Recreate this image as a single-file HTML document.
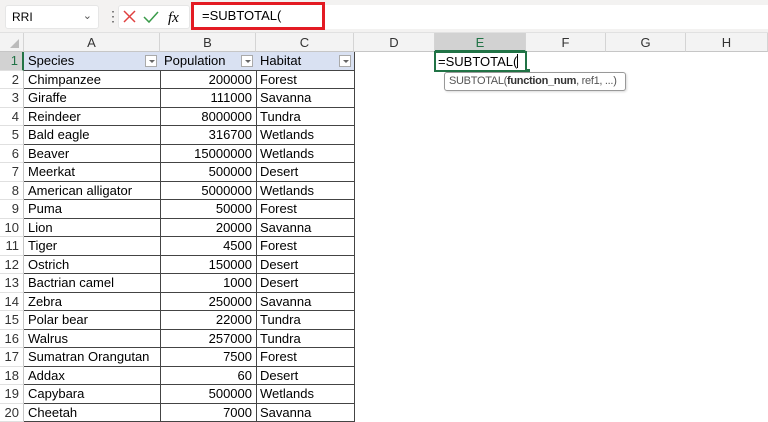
<!DOCTYPE html>
<html><head><meta charset="utf-8"><style>
*{box-sizing:border-box;margin:0;padding:0}
body{width:768px;height:420px;overflow:hidden;background:#fff;font-family:"Liberation Sans",sans-serif;position:relative;font-size:13px;color:#000}
.abs{position:absolute}
.tb{left:0;top:0;width:768px;height:33px;background:#f3f2f1;border-bottom:1px solid #e1e1e1}
.ch{top:33px;height:19px;background:#f3f3f3;border-right:1px solid #d4d4d4;border-bottom:1px solid #c6c6c6;text-align:center;line-height:19px;font-size:13px;color:#333}
.r{left:0;width:768px;height:18.5px}
.c{position:absolute;top:0;height:18.5px;line-height:18px;padding:0 4px;white-space:nowrap;overflow:hidden}
.rh{left:0;width:24px;background:#fff;border-right:1px solid #c6c6c6;border-bottom:1px solid #e0e0e0;text-align:right;padding-right:4px;color:#333}
.a{left:24px;width:137px;border-right:1px solid #444;border-bottom:1px solid #444}
.b{left:160px;width:97px;border-right:1px solid #444;border-bottom:1px solid #444;text-align:right}
.cc{left:256px;width:99px;border-right:1px solid #444;border-bottom:1px solid #444}
.h .a,.h .b,.h .cc{background:#d9e1f2}
.dd{position:absolute;right:3px;top:3px;width:12px;height:12px;border:1px solid #aaa;background:#fff}
.dd:after{content:"";position:absolute;left:3px;top:4px;border-left:3px solid transparent;border-right:3px solid transparent;border-top:3px solid #666}
</style></head><body>
<div class="abs tb"></div>
<div class="abs" style="left:5px;top:5px;width:94px;height:24px;background:#fff;border-radius:3px;border:1px solid #e6e6e6;line-height:22px;padding-left:6px;font-size:12px">RRI<span style="position:absolute;right:6px;top:-1px;font-size:11px;color:#555">&#8964;</span></div>
<div class="abs" style="left:106px;top:8px;color:#555;font-size:14px;line-height:16px">&#8942;</div>
<div class="abs" style="left:118px;top:5px;width:72px;height:24px;background:#fff;border-radius:3px;border:1px solid #e6e6e6"></div>
<svg class="abs" style="left:122px;top:9px" width="60" height="16"><path d="M2 2 L13 13 M13 2 L2 13" stroke="#e04040" stroke-width="1.5"/><path d="M22 8 L27 13 L36 3" stroke="#3a9b4a" stroke-width="1.5" fill="none"/><text x="46" y="13" font-family="Liberation Serif" font-style="italic" font-size="15">fx</text></svg>
<div class="abs" style="left:193px;top:5px;width:575px;height:24px;background:#fff"></div>
<div class="abs" style="left:191px;top:2px;width:134px;height:28px;border:3px solid #e31b23;background:#fff;line-height:22px;padding-left:8px;font-size:13px">=SUBTOTAL(</div>
<div class="abs ch" style="left:0;width:24px;background:#f3f3f3"><svg width="24" height="19"><path d="M19 15 L19 6 L10 15Z" fill="#bbb"/></svg></div>
<div class="abs ch" style="left:24px;width:136px">A</div>
<div class="abs ch" style="left:160px;width:96px">B</div>
<div class="abs ch" style="left:256px;width:98px">C</div>
<div class="abs ch" style="left:354px;width:81px">D</div>
<div class="abs ch" style="left:435px;width:91px;background:#d2d2d2;border-bottom:2px solid #217346;color:#217346">E</div>
<div class="abs ch" style="left:526px;width:80px">F</div>
<div class="abs ch" style="left:606px;width:80px">G</div>
<div class="abs ch" style="left:686px;width:82px">H</div>

<div class="abs r h" style="top:52px"><div class="c rh" style="background:#d2d2d2;border-right:2px solid #217346;color:#217346">1</div><div class="c a">Species<span class="dd"></span></div><div class="c b" style="text-align:left">Population<span class="dd"></span></div><div class="c cc">Habitat<span class="dd"></span></div></div>
<div class="abs r" style="top:70.5px"><div class="c rh">2</div><div class="c a">Chimpanzee</div><div class="c b">200000</div><div class="c cc">Forest</div></div>
<div class="abs r" style="top:89px"><div class="c rh">3</div><div class="c a">Giraffe</div><div class="c b">111000</div><div class="c cc">Savanna</div></div>
<div class="abs r" style="top:107.5px"><div class="c rh">4</div><div class="c a">Reindeer</div><div class="c b">8000000</div><div class="c cc">Tundra</div></div>
<div class="abs r" style="top:126px"><div class="c rh">5</div><div class="c a">Bald eagle</div><div class="c b">316700</div><div class="c cc">Wetlands</div></div>
<div class="abs r" style="top:144.5px"><div class="c rh">6</div><div class="c a">Beaver</div><div class="c b">15000000</div><div class="c cc">Wetlands</div></div>
<div class="abs r" style="top:163px"><div class="c rh">7</div><div class="c a">Meerkat</div><div class="c b">500000</div><div class="c cc">Desert</div></div>
<div class="abs r" style="top:181.5px"><div class="c rh">8</div><div class="c a">American alligator</div><div class="c b">5000000</div><div class="c cc">Wetlands</div></div>
<div class="abs r" style="top:200px"><div class="c rh">9</div><div class="c a">Puma</div><div class="c b">50000</div><div class="c cc">Forest</div></div>
<div class="abs r" style="top:218.5px"><div class="c rh">10</div><div class="c a">Lion</div><div class="c b">20000</div><div class="c cc">Savanna</div></div>
<div class="abs r" style="top:237px"><div class="c rh">11</div><div class="c a">Tiger</div><div class="c b">4500</div><div class="c cc">Forest</div></div>
<div class="abs r" style="top:255.5px"><div class="c rh">12</div><div class="c a">Ostrich</div><div class="c b">150000</div><div class="c cc">Desert</div></div>
<div class="abs r" style="top:274px"><div class="c rh">13</div><div class="c a">Bactrian camel</div><div class="c b">1000</div><div class="c cc">Desert</div></div>
<div class="abs r" style="top:292.5px"><div class="c rh">14</div><div class="c a">Zebra</div><div class="c b">250000</div><div class="c cc">Savanna</div></div>
<div class="abs r" style="top:311px"><div class="c rh">15</div><div class="c a">Polar bear</div><div class="c b">22000</div><div class="c cc">Tundra</div></div>
<div class="abs r" style="top:329.5px"><div class="c rh">16</div><div class="c a">Walrus</div><div class="c b">257000</div><div class="c cc">Tundra</div></div>
<div class="abs r" style="top:348px"><div class="c rh">17</div><div class="c a">Sumatran Orangutan</div><div class="c b">7500</div><div class="c cc">Forest</div></div>
<div class="abs r" style="top:366.5px"><div class="c rh">18</div><div class="c a">Addax</div><div class="c b">60</div><div class="c cc">Desert</div></div>
<div class="abs r" style="top:385px"><div class="c rh">19</div><div class="c a">Capybara</div><div class="c b">500000</div><div class="c cc">Wetlands</div></div>
<div class="abs r" style="top:403.5px"><div class="c rh">20</div><div class="c a">Cheetah</div><div class="c b">7000</div><div class="c cc">Savanna</div></div>

<div class="abs" style="left:434px;top:51px;width:93px;height:21px;border:2px solid #217346;background:#fff;line-height:17px;padding-left:2px;font-size:13px">=SUBTOTAL(<span style="display:inline-block;width:1px;height:14px;background:#000;vertical-align:-2px"></span></div>
<div class="abs" style="left:526px;top:69px;width:4px;height:4px;background:#217346"></div>
<div class="abs" style="left:444px;top:72px;width:182px;height:19px;border:1px solid #999;border-radius:3px;background:#fff;line-height:17px;padding-left:4px;font-size:11px;letter-spacing:-0.3px;color:#555;white-space:nowrap;overflow:hidden;box-shadow:1px 1px 2px rgba(0,0,0,.15)">SUBTOTAL(<b style="color:#333">function_num</b>, ref1, ...)</div>
</body></html>
